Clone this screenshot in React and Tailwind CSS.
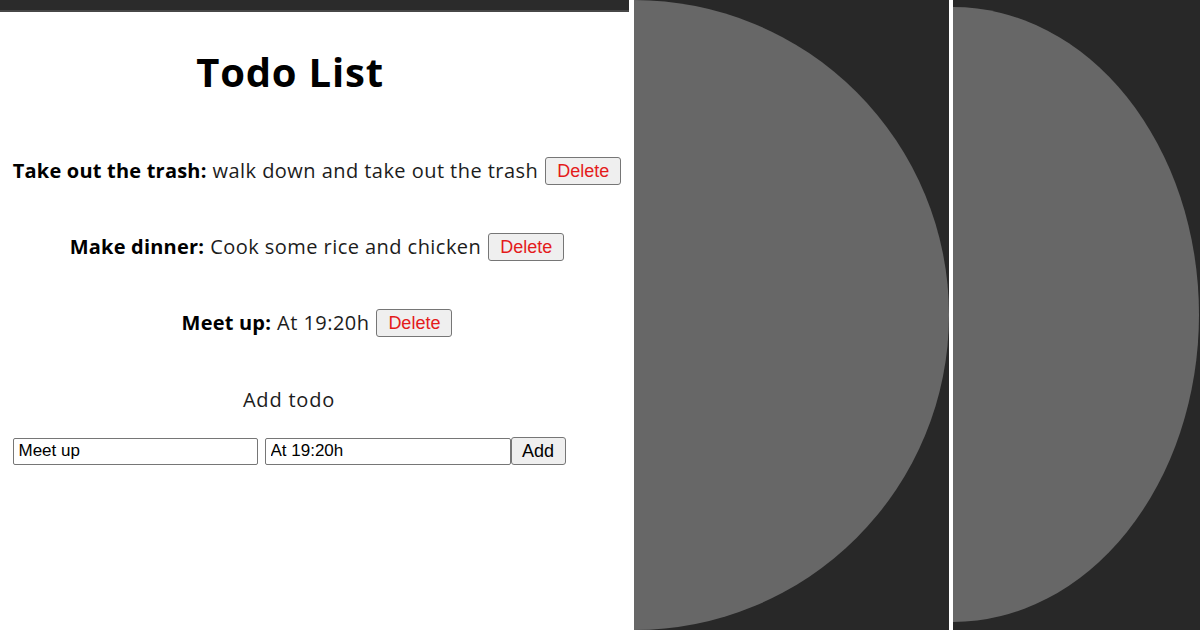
import { useState } from 'react';

const initialTodos = [
  { title: 'Take out the trash', desc: 'walk down and take out the trash' },
  { title: 'Make dinner', desc: 'Cook some rice and chicken' },
  { title: 'Meet up', desc: 'At 19:20h' },
];

function TodoItem({ todo, onDelete }) {
  return (
    <div className="flex h-[28px] items-center justify-center whitespace-nowrap text-[20px] text-[#1c1c1c]">
      <span className="font-bold tracking-[0.2px] text-black">{todo.title}:</span>
      <span className="ml-[6px] tracking-[0.45px]">{todo.desc}</span>
      <button
        onClick={onDelete}
        className="ml-[7px] h-[28px] w-[76px] rounded-[3px] border border-[#767676] bg-[#efefef] font-['Liberation_Sans',Arial,sans-serif] text-[18px] text-[#e41b1b]"
      >
        Delete
      </button>
    </div>
  );
}

export default function App() {
  const [todos, setTodos] = useState(initialTodos);
  const [title, setTitle] = useState('Meet up');
  const [desc, setDesc] = useState('At 19:20h');

  function addTodo() {
    if (!title) return;
    setTodos((arr) => [...arr, { title, desc }]);
  }

  return (
    <div className="flex h-[630px] w-[1200px] overflow-hidden bg-white font-['Open_Sans','Noto_Sans',sans-serif]">
      {/* app window */}
      <div className="flex w-[634px] shrink-0 flex-col">
        <div className="h-[12px] w-[629px] border-b-2 border-[#474747] bg-[#2b2b2b]" />

        <div className="w-[580px]">
          <h1 className="mt-[33px] text-center text-[40px] font-bold leading-[54px] tracking-[0.8px] text-black">Todo List</h1>
        </div>

        <div className="mt-[58px] flex flex-col gap-[48px]">
          {todos.map((t, i) => (
            <TodoItem key={i} todo={t} onDelete={() => setTodos((arr) => arr.filter((_, j) => j !== i))} />
          ))}
        </div>

        <div className="mt-[49px] w-[578px]">
          <div className="flex h-[28px] items-center justify-center text-[20px] tracking-[0.8px] text-[#1c1c1c]">Add todo</div>
          <div className="mt-[23px] flex h-[28px] items-center justify-center font-['Liberation_Sans',Arial,sans-serif] text-[17px] text-black">
            <input
              className="h-[27px] w-[245px] rounded-[2px] border border-[#767676] px-[5px] outline-none"
              value={title}
              onChange={(e) => setTitle(e.target.value)}
            />
            <input
              className="ml-[7px] h-[27px] w-[246px] rounded-[2px] border border-[#767676] px-[5px] outline-none"
              value={desc}
              onChange={(e) => setDesc(e.target.value)}
            />
            <button
              onClick={addTodo}
              className="h-[28px] w-[55px] rounded-[3px] border border-[#767676] bg-[#efefef] text-[18px]"
            >
              Add
            </button>
          </div>
        </div>
      </div>

      {/* preview panels */}
      <div className="h-full w-[315px] shrink-0 bg-[#282828]">
        <div className="h-full w-[315px] rounded-r-full bg-[#676767]" />
      </div>
      <div className="w-[4px] shrink-0 bg-white" />
      <div className="h-full flex-1 bg-[#282828] pt-[7px]">
        <div className="h-[615px] w-[246px] rounded-r-[100%_50%] bg-[#676767]" />
      </div>
    </div>
  );
}
